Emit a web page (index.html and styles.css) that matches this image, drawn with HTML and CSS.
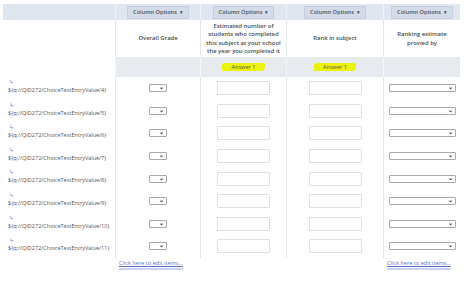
FILE: index.html
```html
<!DOCTYPE html>
<html>
<head>
<meta charset="utf-8">
<link rel="stylesheet" href="styles.css">
</head>
<body>
<div class="matrix">
  <div class="row opts">
    <div class="cell"></div>
    <div class="cell"><span class="btn">Column Options <span class="caret">&#9662;</span></span></div>
    <div class="cell"><span class="btn">Column Options <span class="caret">&#9662;</span></span></div>
    <div class="cell"><span class="btn">Column Options <span class="caret">&#9662;</span></span></div>
    <div class="cell"><span class="btn">Column Options <span class="caret">&#9662;</span></span></div>
  </div>
  <div class="row heads">
    <div class="cell"></div>
    <div class="cell">Overall Grade</div>
    <div class="cell">Estimated number of students who completed this subject at your school the year you completed it</div>
    <div class="cell">Rank in subject</div>
    <div class="cell">Ranking estimate provied by</div>
  </div>
  <div class="row answers">
    <div class="cell blank"></div>
    <div class="cell"></div>
    <div class="cell"><span class="hl">Answer 1</span></div>
    <div class="cell"><span class="hl">Answer 1</span></div>
    <div class="cell"></div>
  </div>
  <div id="rows"></div>
  <div class="row links">
    <div class="cell blank"></div>
    <div class="cell"><span class="link">Click here to edit items...</span></div>
    <div class="cell blank"></div>
    <div class="cell blank"></div>
    <div class="cell"><span class="link">Click here to edit items...</span></div>
  </div>
</div>
<script>
  var host = document.getElementById('rows');
  var html = '';
  for (var i = 4; i <= 11; i++) {
    html += '<div class="row data">' +
      '<div class="cell label"><span class="arrow">&#8627;</span><span class="pipe">${q://QID272/ChoiceTextEntryValue/' + i + '}</span></div>' +
      '<div class="cell"><span class="sel small"><span class="chev">&#8964;</span></span></div>' +
      '<div class="cell"><span class="txt"></span></div>' +
      '<div class="cell"><span class="txt"></span></div>' +
      '<div class="cell"><span class="sel wide"><span class="chev">&#8964;</span></span></div>' +
      '</div>';
  }
  host.innerHTML = html;
</script>
</body>
</html>
```

FILE: styles.css
```css
html, body {
  margin: 0;
  padding: 0;
  background: #ffffff;
}
body {
  font-family: "Open Sans", "Liberation Sans", sans-serif;
  color: #444;
  width: 474px;
  height: 285px;
  overflow: hidden;
}
.matrix {
  margin: 4px 0 0 3px;
  width: 457px;
}
.row {
  display: grid;
  grid-template-columns: 112px 85px 86px 97px 77px;
}
.cell {
  border-left: 1px solid #e4e6ea;
  display: flex;
  align-items: center;
  justify-content: center;
  box-sizing: border-box;
}
.row .cell:first-child {
  border-left: none;
}
.opts {
  background: #dfe6f0;
  height: 16px;
}
.opts .cell {
  border-left: 1px solid #eef2f7;
}
.btn {
  display: flex;
  align-items: center;
  gap: 3px;
  background: #d5dce7;
  border: 1px solid #c6cfdb;
  height: 11px;
  padding: 0 5px;
  font-size: 5.6px;
  font-weight: 600;
  color: #4a5566;
  white-space: nowrap;
}
.caret {
  font-size: 5px;
}
.heads {
  height: 37px;
}
.heads .cell {
  font-size: 5.9px;
  font-weight: 600;
  color: #4b4b4b;
  text-align: center;
  line-height: 8.4px;
  padding: 0 2px;
}
.answers {
  height: 20px;
}
.answers .cell {
  background: #e7eaef;
  border-left: 1px solid #f4f5f7;
}
.answers .cell.blank {
  background: transparent;
}
.hl {
  background: #ecf20c;
  border-radius: 2px 1px 4px 1px;
  padding: 0 9px;
  font-size: 5.6px;
  color: #555;
  line-height: 8px;
}
.data {
  height: 22.6px;
}
.label {
  flex-direction: column;
  align-items: flex-start;
  justify-content: flex-start;
  padding: 2px 0 0 5px;
}
.arrow {
  font-size: 6px;
  line-height: 6px;
  color: #7aa0d0;
  margin-left: 1px;
}
.pipe {
  font-size: 5.5px;
  line-height: 8px;
  color: #555;
  white-space: nowrap;
  margin-top: 1px;
}
.sel {
  display: flex;
  align-items: center;
  justify-content: flex-end;
  height: 8px;
  border: 1px solid #a9a9a9;
  border-radius: 1px;
  background: #fff;
  box-sizing: border-box;
  padding-right: 2px;
}
.sel.small {
  width: 18px;
}
.sel.wide {
  width: 67px;
}
.chev {
  font-size: 6px;
  line-height: 4px;
  font-weight: 700;
  color: #333;
  transform: translateY(-1px);
}
.txt {
  display: block;
  width: 53px;
  height: 14px;
  border: 1px solid #e0e0e0;
  border-radius: 1px;
  box-sizing: border-box;
  background: #fff;
}
.links {
  height: 14px;
}
.links .cell {
  border-left: none;
  justify-content: flex-start;
  align-items: flex-start;
  padding: 2px 0 0 4px;
}
.link {
  font-size: 5.6px;
  color: #5b6fc7;
  text-decoration: underline;
  line-height: 7px;
  border-bottom: 2px solid #c9d4ee;
  padding-bottom: 1px;
  white-space: nowrap;
}
```
